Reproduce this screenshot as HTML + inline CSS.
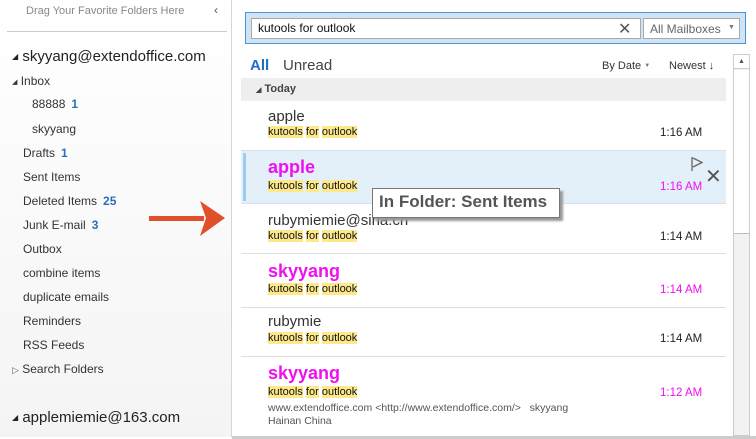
<!DOCTYPE html>
<html><head><meta charset="utf-8"><style>
*{margin:0;padding:0;box-sizing:border-box}
body{width:756px;height:439px;overflow:hidden;background:#fff;font-family:"Liberation Sans",sans-serif;position:relative;color:#222}
.abs{position:absolute;white-space:nowrap}
#left{position:absolute;left:0;top:0;width:232px;height:437px;background:linear-gradient(#fff,#f4f4f4);border-right:1px solid #d6d6d6}
.f{position:absolute;left:23px;font-size:12px;color:#333}
.n{color:#2a6ebb;font-weight:bold;margin-left:6px}
.hl{background:#fde98c}
.sub{position:absolute;left:268px;font-size:11px;color:#111}
.nm{position:absolute;left:268px;font-size:15px;color:#333}
.pk{position:absolute;left:268px;font-size:18px;font-weight:bold;color:#f00ff0}
.tm{position:absolute;left:660px;font-size:11.5px;color:#222}
.sep{position:absolute;left:241px;width:485px;height:1px;background:#dedede}
</style></head><body>
<div id="left">
<div class="abs" style="left:26px;top:5px;font-size:11px;color:#888">Drag Your Favorite Folders Here</div>
<div class="abs" style="left:214px;top:3px;font-size:12px;color:#555">‹</div>
<div class="abs" style="left:7px;top:31px;width:220px;height:1px;background:#ccc"></div>
<div class="abs" style="left:12px;top:48px;font-size:15px;color:#222"><span style="font-size:8px;vertical-align:2px">◢</span> skyyang@extendoffice.com</div>
<div class="abs" style="left:12px;top:74px;font-size:12px;color:#333"><span style="font-size:7px;vertical-align:1px">◢</span> Inbox</div>
<div class="f" style="left:32px;top:97px">88888<span class="n">1</span></div>
<div class="f" style="left:32px;top:122px">skyyang</div>
<div class="f" style="top:146px">Drafts<span class="n">1</span></div>
<div class="f" style="top:170px">Sent Items</div>
<div class="f" style="top:194px">Deleted Items<span class="n">25</span></div>
<div class="f" style="top:218px">Junk E-mail<span class="n">3</span></div>
<div class="f" style="top:242px">Outbox</div>
<div class="f" style="top:266px">combine items</div>
<div class="f" style="top:290px">duplicate emails</div>
<div class="f" style="top:314px">Reminders</div>
<div class="f" style="top:338px">RSS Feeds</div>
<div class="f" style="left:12px;top:362px"><span style="font-size:9px;color:#666">▷</span> Search Folders</div>
<div class="abs" style="left:12px;top:409px;font-size:15px;color:#222"><span style="font-size:8px;vertical-align:2px">◢</span> applemiemie@163.com</div>
</div>
<svg class="abs" style="left:148px;top:200px" width="80" height="38"><rect x="1" y="16" width="55" height="5" fill="#e0502a"/><polygon points="52,1 77,18 52,36 58,18" fill="#e0502a"/></svg>
<div class="abs" style="left:245px;top:12px;width:501px;height:32px;background:#cfe3f5;border:1px solid #4b95d4"></div>
<div class="abs" style="left:251px;top:18px;width:390px;height:21px;background:#fff;border:1px solid #aaa"></div>
<div class="abs" style="left:258px;top:21px;font-size:12px;color:#111">kutools for outlook</div>
<div class="abs" style="left:618px;top:19px;font-size:16px;color:#555">✕</div>
<div class="abs" style="left:643px;top:18px;width:97px;height:21px;background:#fff;border:1px solid #aaa"></div>
<div class="abs" style="left:650px;top:22px;font-size:12px;color:#666">All Mailboxes</div>
<div class="abs" style="left:728px;top:24px;font-size:7px;color:#777">▼</div>
<div class="abs" style="left:250px;top:57px;font-size:15px;font-weight:bold;color:#1e6fc4">All</div>
<div class="abs" style="left:283px;top:57px;font-size:15px;color:#444">Unread</div>
<div class="abs" style="left:602px;top:60px;font-size:11px;color:#333">By Date <span style="font-size:6px;color:#777;vertical-align:2px">▼</span></div>
<div class="abs" style="left:669px;top:60px;font-size:11px;color:#333">Newest ↓</div>
<div class="abs" style="left:733px;top:54px;width:17px;height:382px;background:#f2f2f2;border:1px solid #ccc"></div>
<div class="abs" style="left:734px;top:55px;width:15px;height:14px;background:#fff;border-bottom:1px solid #ccc;font-size:7px;color:#555;text-align:center;line-height:14px">▲</div>
<div class="abs" style="left:734px;top:70px;width:15px;height:164px;background:#fff;border-bottom:1px solid #bbb"></div>
<div class="abs" style="left:241px;top:78px;width:485px;height:23px;background:#eee"></div>
<div class="abs" style="left:256px;top:83px;font-size:11px;font-weight:bold;color:#444"><span style="font-size:7px">◢</span> Today</div>
<div class="nm" style="top:108px">apple</div>
<div class="sub" style="top:126px"><span class="hl">kutools</span> <span class="hl">for</span> <span class="hl">outlook</span></div>
<div class="tm" style="top:127px">1:16 AM</div>
<div class="abs" style="left:241px;top:150px;width:485px;height:54px;background:#e3eff9;border-top:1px solid #d5e2ee;border-bottom:1px solid #dde"></div>
<div class="abs" style="left:243px;top:153px;width:3px;height:48px;background:#9fcbed"></div>
<div class="pk" style="top:157px">apple</div>
<div class="sub" style="top:180px"><span class="hl">kutools</span> <span class="hl">for</span> <span class="hl">outlook</span></div>
<div class="tm" style="top:181px;color:#f00ff0">1:16 AM</div>
<svg class="abs" style="left:690px;top:156px" width="14" height="16"><path d="M2 1V15M3 2L12 6.5L3 11" fill="none" stroke="#666" stroke-width="1.3"/></svg>
<div class="abs" style="left:705px;top:164px;font-size:20px;color:#555">✕</div>
<div class="nm" style="top:212px">rubymiemie@sina.cn</div>
<div class="sub" style="top:230px"><span class="hl">kutools</span> <span class="hl">for</span> <span class="hl">outlook</span></div>
<div class="tm" style="top:231px">1:14 AM</div>
<div class="sep" style="top:253px"></div>
<div class="pk" style="top:261px">skyyang</div>
<div class="sub" style="top:283px"><span class="hl">kutools</span> <span class="hl">for</span> <span class="hl">outlook</span></div>
<div class="tm" style="top:284px;color:#f00ff0">1:14 AM</div>
<div class="sep" style="top:307px"></div>
<div class="nm" style="top:313px">rubymie</div>
<div class="sub" style="top:332px"><span class="hl">kutools</span> <span class="hl">for</span> <span class="hl">outlook</span></div>
<div class="tm" style="top:333px">1:14 AM</div>
<div class="sep" style="top:356px"></div>
<div class="pk" style="top:363px">skyyang</div>
<div class="sub" style="top:386px"><span class="hl">kutools</span> <span class="hl">for</span> <span class="hl">outlook</span></div>
<div class="tm" style="top:387px;color:#f00ff0">1:12 AM</div>
<div class="abs" style="left:268px;top:402px;font-size:10.5px;color:#555">www.extendoffice.com &lt;http://www.extendoffice.com/&gt; &nbsp; skyyang</div>
<div class="abs" style="left:268px;top:415px;font-size:10.5px;color:#555">Hainan China</div>
<div class="abs" style="left:232px;top:436px;width:524px;height:3px;background:#ccc"></div>
<div class="abs" style="left:372px;top:188px;width:188px;height:30px;background:#fff;border:1px solid #777;box-shadow:3px 3px 2px #999;font-size:17px;font-weight:bold;color:#555;padding:3px 0 0 6px">In Folder: Sent Items</div>
</body></html>
